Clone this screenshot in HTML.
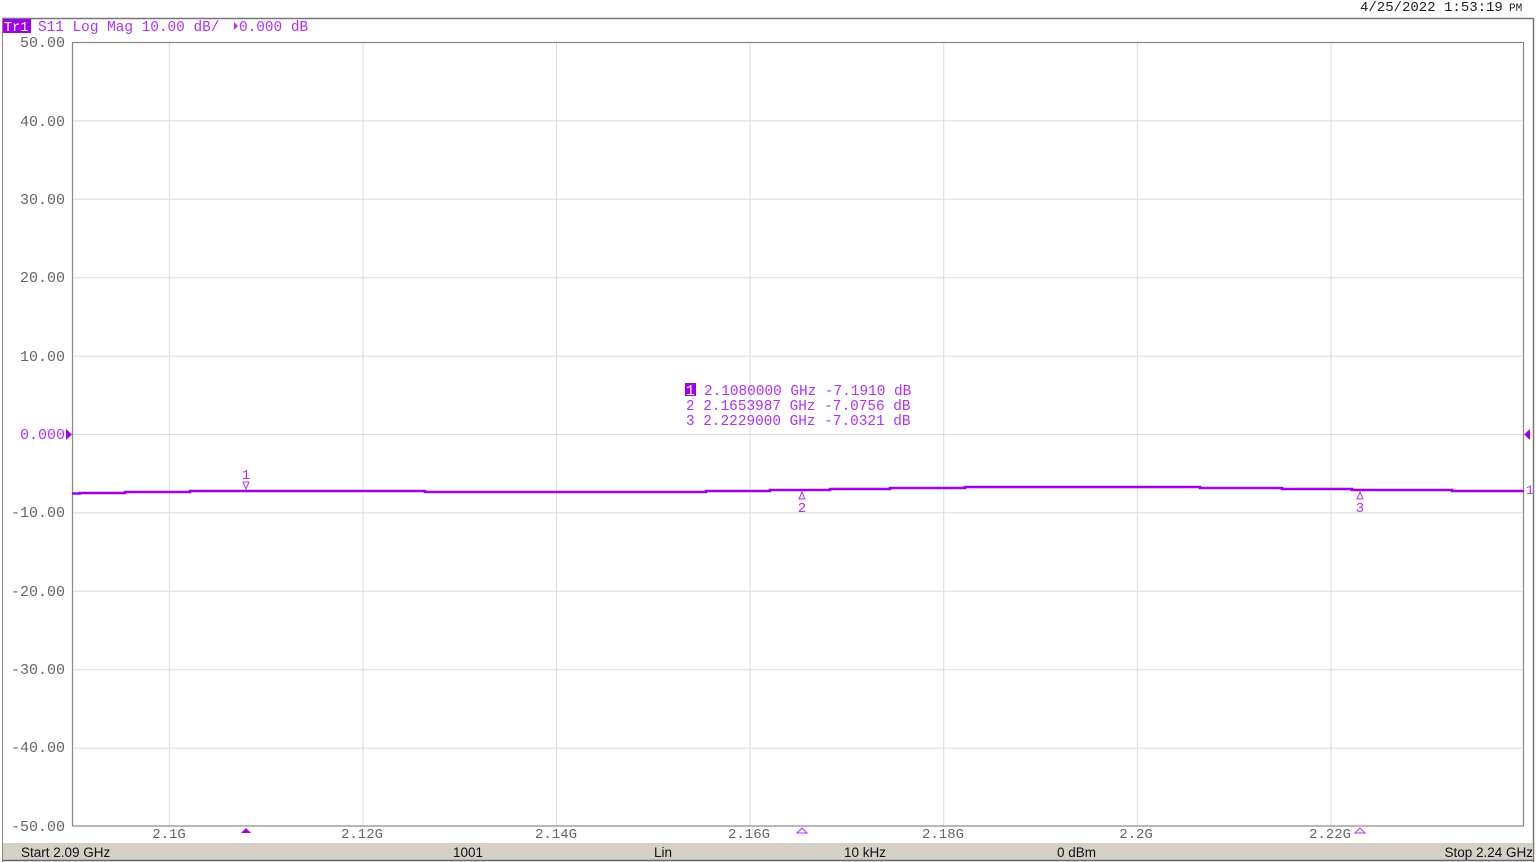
<!DOCTYPE html>
<html><head><meta charset="utf-8"><style>
html,body{margin:0;padding:0;background:#fff;width:1536px;height:862px;overflow:hidden}
svg text{font-family:"Liberation Mono",monospace}
.s{font-family:"Liberation Sans",sans-serif}
</style></head><body>
<svg width="1536" height="862" viewBox="0 0 1536 862" xmlns="http://www.w3.org/2000/svg">
<rect width="1536" height="862" fill="#fff"/>
<!-- outer frame -->
<line x1="2" y1="18.5" x2="1534" y2="18.5" stroke="#777" stroke-width="1.5"/>
<line x1="2.5" y1="18" x2="2.5" y2="862" stroke="#888" stroke-width="1"/>
<line x1="1533.5" y1="18" x2="1533.5" y2="862" stroke="#777" stroke-width="1.5"/>
<!-- date -->
<text x="1360" y="11" font-size="14" fill="#222">4/25/2022 1:53:19</text>
<text x="1509" y="11" font-size="11" fill="#222">PM</text>
<!-- header -->
<rect x="3" y="19" width="28" height="14" fill="#a000f0"/>
<text x="4" y="31" font-size="13.5" fill="#fff">Tr1</text>
<text x="38" y="31" font-size="14.4" fill="#b030ff">S11 Log Mag 10.00 dB/</text>
<path d="M234 22 L238 26 L234 30 Z" fill="#b030ff"/>
<text x="239" y="31" font-size="14.4" fill="#b030ff">0.000 dB</text>
<!-- grid -->
<g stroke="#dcdcdc" stroke-width="1">
<line x1="72" x2="1524" y1="120.9" y2="120.9"/>
<line x1="72" x2="1524" y1="199.3" y2="199.3"/>
<line x1="72" x2="1524" y1="277.7" y2="277.7"/>
<line x1="72" x2="1524" y1="356.1" y2="356.1"/>
<line x1="72" x2="1524" y1="434.5" y2="434.5"/>
<line x1="72" x2="1524" y1="512.9" y2="512.9"/>
<line x1="72" x2="1524" y1="591.3" y2="591.3"/>
<line x1="72" x2="1524" y1="669.7" y2="669.7"/>
<line x1="72" x2="1524" y1="748.1" y2="748.1"/>
<line x1="169.3" x2="169.3" y1="42" y2="826"/>
<line x1="362.9" x2="362.9" y1="42" y2="826"/>
<line x1="556.5" x2="556.5" y1="42" y2="826"/>
<line x1="750.1" x2="750.1" y1="42" y2="826"/>
<line x1="943.7" x2="943.7" y1="42" y2="826"/>
<line x1="1137.3" x2="1137.3" y1="42" y2="826"/>
<line x1="1330.9" x2="1330.9" y1="42" y2="826"/>
</g>
<rect x="72.5" y="42.5" width="1451" height="783.5" fill="none" stroke="#888" stroke-width="1.2"/>
<!-- y labels -->
<g font-size="15" fill="#666" text-anchor="end">
<text x="65" y="47">50.00</text>
<text x="65" y="126">40.00</text>
<text x="65" y="204">30.00</text>
<text x="65" y="282">20.00</text>
<text x="65" y="361">10.00</text>
<text x="65" y="517">-10.00</text>
<text x="65" y="596">-20.00</text>
<text x="65" y="674">-30.00</text>
<text x="65" y="752">-40.00</text>
<text x="65" y="831">-50.00</text>
</g>
<text x="65" y="439" font-size="15" fill="#b030ff" text-anchor="end">0.000</text>
<path d="M66 429 L72 434.5 L66 440 Z" fill="#a000f0"/>
<path d="M1530 429 L1524 434.5 L1530 440 Z" fill="#a000f0"/>
<!-- x labels -->
<g font-size="14" fill="#666" text-anchor="middle" class="s">
<text x="169" y="838" style="font-family:'Liberation Mono',monospace">2.1G</text>
<text x="362" y="838" style="font-family:'Liberation Mono',monospace">2.12G</text>
<text x="556" y="838" style="font-family:'Liberation Mono',monospace">2.14G</text>
<text x="749" y="838" style="font-family:'Liberation Mono',monospace">2.16G</text>
<text x="943" y="838" style="font-family:'Liberation Mono',monospace">2.18G</text>
<text x="1136" y="838" style="font-family:'Liberation Mono',monospace">2.2G</text>
<text x="1330" y="838" style="font-family:'Liberation Mono',monospace">2.22G</text>
</g>
<!-- bottom markers -->
<path d="M241 833 L246 828 L251 833 Z" fill="#a000f0"/>
<path d="M797 833 L802 828 L807 833 Z" fill="none" stroke="#b030ff"/>
<path d="M1355 833 L1360 828 L1365 833 Z" fill="none" stroke="#b030ff"/>
<!-- trace -->
<path d="M72 493.5 H80 V493 H125 V492 H190 V491 H425 V492 H706 V491 H770 V490 H830 V489 H890 V488 H965 V487 H1200 V488 H1282 V489 H1352 V490 H1452 V491 H1524" fill="none" stroke="#a000f0" stroke-width="2.6"/>
<text x="1526" y="494" font-size="13" fill="#b030ff">1</text>
<!-- markers on trace -->
<text x="246" y="479" font-size="14" fill="#b030ff" text-anchor="middle">1</text>
<path d="M243 482 H249 L246 489 Z" fill="none" stroke="#b030ff"/>
<path d="M799 499 L802 492 L805 499 Z" fill="none" stroke="#b030ff"/>
<text x="802" y="512" font-size="14" fill="#b030ff" text-anchor="middle">2</text>
<path d="M1357 499 L1360 492 L1363 499 Z" fill="none" stroke="#b030ff"/>
<text x="1360" y="512" font-size="14" fill="#b030ff" text-anchor="middle">3</text>
<!-- readout -->
<rect x="685" y="383" width="11" height="13" fill="#a000f0"/>
<text x="686" y="395" font-size="14.4" fill="#fff">1</text>
<g font-size="14.4" fill="#b030ff">
<text x="704" y="395">2.1080000 GHz -7.1910 dB</text>
<text x="686" y="410">2 2.1653987 GHz -7.0756 dB</text>
<text x="686" y="425">3 2.2229000 GHz -7.0321 dB</text>
</g>
<!-- status bar -->
<rect x="3" y="843" width="1530" height="17" fill="#d4d0c8"/>
<line x1="3" y1="860.5" x2="1533" y2="860.5" stroke="#666" stroke-width="1.5"/>
<g font-size="13.5" fill="#111" class="s">
<text x="21" y="857" class="s">Start 2.09 GHz</text>
<text x="453" y="857" class="s">1001</text>
<text x="654" y="857" class="s">Lin</text>
<text x="844" y="857" class="s">10 kHz</text>
<text x="1057" y="857" class="s">0 dBm</text>
<text x="1533" y="857" class="s" text-anchor="end">Stop 2.24 GHz</text>
</g>
</svg>
</body></html>
